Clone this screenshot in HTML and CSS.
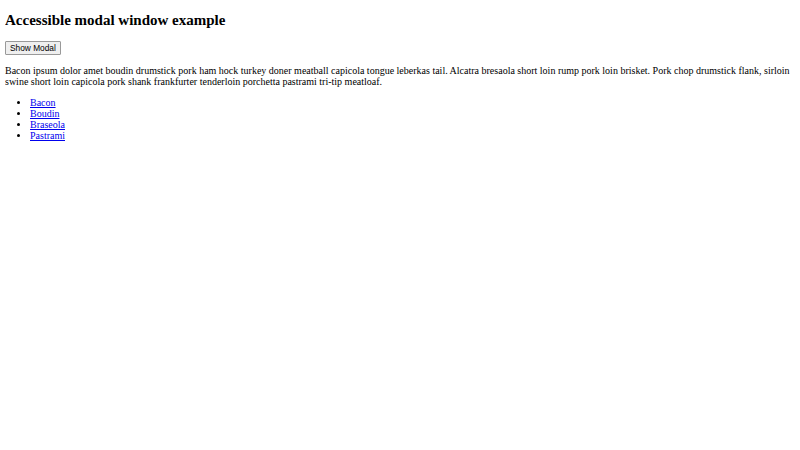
FILE: index.html
```html
<!DOCTYPE html>
<html lang="en">
<head>
<meta charset="utf-8">
<title>Accessible modal window example</title>
<link rel="stylesheet" href="styles.css">
</head>
<body>
<h2 class="title">Accessible modal window example</h2>
<button class="btn" type="button">Show Modal</button>
<p class="text">Bacon ipsum dolor amet boudin drumstick pork ham hock turkey doner meatball capicola tongue leberkas tail. Alcatra bresaola short loin rump pork loin brisket. Pork chop drumstick flank, sirloin swine short loin capicola pork shank frankfurter tenderloin porchetta pastrami tri-tip meatloaf.</p>
<ul class="list">
<li><a href="#bacon">Bacon</a></li>
<li><a href="#boudin">Boudin</a></li>
<li><a href="#braseola">Braseola</a></li>
<li><a href="#pastrami">Pastrami</a></li>
</ul>
</body>
</html>
```

FILE: styles.css
```css
html {
  background: #fff;
}
body {
  margin: 5px;
  font-family: "Liberation Serif", "Times New Roman", serif;
  font-size: 10px;
  color: #000;
}
.title {
  font-size: 15px;
  font-weight: bold;
  margin: 7px 0 12px;
}
.btn {
  font-family: "Liberation Sans", Arial, sans-serif;
  font-size: 8.33px;
  padding: 1px 4px;
  border: 1px solid #999;
  border-radius: 1px;
  background: #efefef;
  color: #000;
}
.text {
  margin: 10px 0;
}
.list {
  margin: 10px 0;
  padding-left: 25px;
}
.list a {
  color: #0000ee;
}
```
